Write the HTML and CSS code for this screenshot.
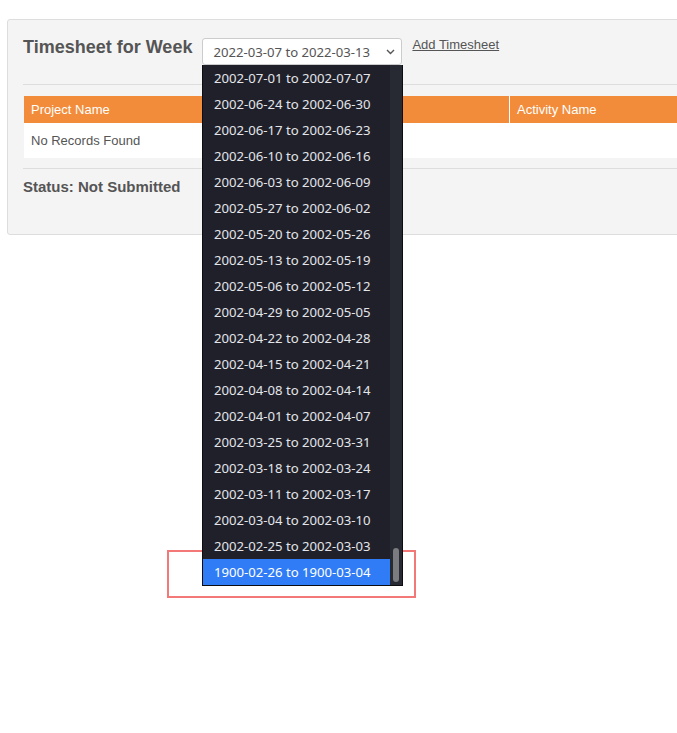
FILE: index.html
```html
<!DOCTYPE html>
<html>
<head>
<meta charset="utf-8">
<link rel="stylesheet" href="styles.css">
</head>
<body>
<div class="panel">
  <div class="head">
    <h1 class="title">Timesheet for Week</h1>
    <div class="select-wrap">
      <div class="select">
        <span>2022-03-07 to 2022-03-13</span>
        <svg class="chev" width="9" height="6" viewBox="0 0 9 6"><path d="M1 1 L4.5 4.5 L8 1" fill="none" stroke="#555" stroke-width="1.4"/></svg>
      </div>
      <div class="list">
        <ul class="items">
          <li>2002-07-01 to 2002-07-07</li>
          <li>2002-06-24 to 2002-06-30</li>
          <li>2002-06-17 to 2002-06-23</li>
          <li>2002-06-10 to 2002-06-16</li>
          <li>2002-06-03 to 2002-06-09</li>
          <li>2002-05-27 to 2002-06-02</li>
          <li>2002-05-20 to 2002-05-26</li>
          <li>2002-05-13 to 2002-05-19</li>
          <li>2002-05-06 to 2002-05-12</li>
          <li>2002-04-29 to 2002-05-05</li>
          <li>2002-04-22 to 2002-04-28</li>
          <li>2002-04-15 to 2002-04-21</li>
          <li>2002-04-08 to 2002-04-14</li>
          <li>2002-04-01 to 2002-04-07</li>
          <li>2002-03-25 to 2002-03-31</li>
          <li>2002-03-18 to 2002-03-24</li>
          <li>2002-03-11 to 2002-03-17</li>
          <li>2002-03-04 to 2002-03-10</li>
          <li>2002-02-25 to 2002-03-03</li>
          <li class="sel">1900-02-26 to 1900-03-04</li>
        </ul>
        <div class="track"><div class="thumb"></div></div>
      </div>
    </div>
    <a class="add" href="#">Add Timesheet</a>
  </div>
  <table class="grid">
    <thead>
      <tr><th class="c1">Project Name</th><th>Activity Name</th></tr>
    </thead>
    <tbody>
      <tr><td class="c1">No Records Found</td><td></td></tr>
    </tbody>
  </table>
  <div class="status">Status: Not Submitted</div>
</div>
<div class="mark"></div>
</body>
</html>
```
FILE: styles.css
```css
html, body {
  margin: 0;
  padding: 0;
  overflow: hidden;
  background: #fff;
}
body {
  font-family: "Liberation Sans", Arial, sans-serif;
  color: #555;
  position: relative;
  height: 733px;
}
.panel {
  margin: 19px 0 0 7px;
  width: 760px;
  height: 214px;
  background: #f4f4f4;
  border: 1px solid #ddd;
  border-radius: 3px;
  padding: 0 15px;
}
.head {
  display: flex;
  align-items: flex-start;
  padding-top: 18px;
  height: 46px;
  border-bottom: 1px solid #ddd;
}
.title {
  margin: -1px 0 0 0;
  font-size: 18px;
  line-height: 20px;
  font-weight: bold;
  color: #555;
}
.select-wrap {
  position: relative;
  margin-left: 10px;
  width: 200px;
  height: 27px;
}
.select {
  box-sizing: border-box;
  height: 27px;
  border: 1px solid #ccc;
  border-radius: 3px;
  background: #fff;
  display: flex;
  align-items: center;
  justify-content: space-between;
  padding: 0 6px 0 10px;
  font-family: "Noto Sans", sans-serif;
  font-size: 13.15px;
  color: #555;
}
.chev {
  display: block;
  margin-top: 1px;
}
.list {
  position: absolute;
  top: 27px;
  left: 0;
  width: 201px;
  box-sizing: border-box;
  border: 1px solid #0c0d10;
  border-top: none;
  background: #1f2029;
  display: flex;
  z-index: 5;
}
.items {
  list-style: none;
  margin: 0;
  padding: 0;
  flex: 1;
}
.items li {
  height: 26px;
  line-height: 26px;
  padding-left: 10.5px;
  font-family: "Noto Sans", sans-serif;
  font-size: 13.15px;
  color: #e3e5ea;
  white-space: nowrap;
}
.items li.sel {
  background: #2f7cf6;
  color: #fff;
}
.track {
  width: 12px;
  background: #272a32;
  position: relative;
}
.thumb {
  position: absolute;
  left: 3px;
  bottom: 3px;
  width: 6px;
  height: 34px;
  border-radius: 3px;
  background: #7b7c80;
}
.add {
  margin: -1px 0 0 10px;
  font-size: 13px;
  line-height: 15px;
  color: #555;
  text-decoration: underline;
}
.grid {
  margin: 11px 0 0 1px;
  border-collapse: collapse;
  width: 720px;
  font-size: 13px;
}
.grid th {
  background: #f28c3a;
  color: #fff;
  font-weight: normal;
  text-align: left;
  height: 27px;
  padding: 0 7px;
  border-left: 1px solid #fff;
}
.grid th.c1 {
  border-left: none;
  width: 471px;
}
.grid td {
  background: #fff;
  height: 35px;
  padding: 0 7px;
  color: #555;
}
.status {
  margin-top: 10px;
  border-top: 1px solid #ddd;
  padding-top: 9px;
  font-size: 15px;
  line-height: 18px;
  font-weight: bold;
  color: #555;
}
.mark {
  position: absolute;
  left: 167px;
  top: 550px;
  width: 245px;
  height: 44px;
  border: 2px solid rgba(235, 30, 30, 0.6);
}
```
